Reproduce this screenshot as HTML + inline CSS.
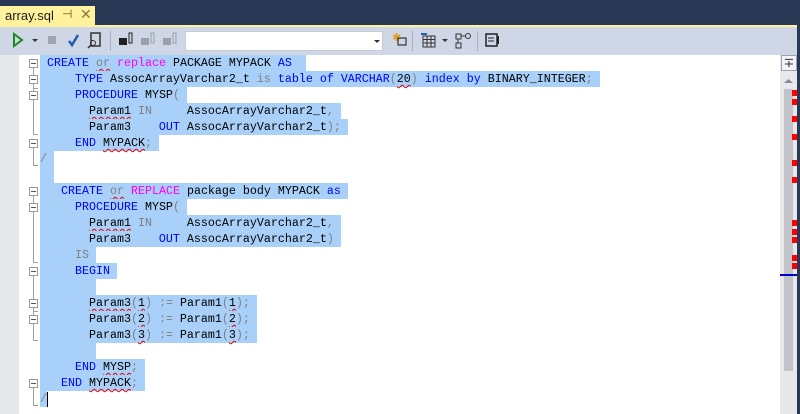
<!DOCTYPE html>
<html><head><meta charset="utf-8"><style>
*{margin:0;padding:0;box-sizing:border-box}
body{width:800px;height:414px;overflow:hidden;background:#fff;position:relative;font-family:"Liberation Sans",sans-serif}
.abs{position:absolute}
.code{position:absolute;left:40px;font-family:"Liberation Mono",monospace;font-size:11.67px;line-height:16px;height:16px;white-space:pre;color:#000}
.code span.s{background:#a8d0f8;display:inline-block;height:16px;vertical-align:top}
.k{color:#0000ff}.g{color:#808080}.m{color:#ff00ff}
.w{text-decoration:underline wavy #e00;text-decoration-thickness:1px;text-underline-offset:2px}
.fb{position:absolute;left:29px;width:9px;height:9px;border:1px solid #999;background:#fff}
.fb:after{content:"";position:absolute;left:1px;top:3px;width:5px;height:1px;background:#555}
.vl{position:absolute;left:33px;width:1px;background:#a0a0a0}
.tk{position:absolute;left:33px;width:5px;height:1px;background:#a0a0a0}
.rm{position:absolute;left:792px;width:5px;height:6px;background:#f00}
</style></head><body>
<div class="abs" style="left:0;top:0;width:800px;height:27px;background:#293955"></div>
<div class="abs" style="left:0;top:6px;width:95px;height:21px;background:#fff29d"></div>
<div class="abs" style="left:0;top:25px;width:800px;height:2px;background:#fff29d"></div>
<div class="abs" style="left:5px;top:8px;font-size:13px;color:#1e1e1e">array.sql</div>
<div class="abs" style="left:62px;top:7px;font-size:12px;color:#6a5a20">⊣</div>
<div class="abs" style="left:80px;top:6px;font-size:14px;color:#8a7a40">✕</div>
<div class="abs" style="left:0;top:27px;width:800px;height:28px;background:#cfd6e5"></div>
<svg class="abs" style="left:0;top:27px" width="800" height="28">
<path d="M14 7 L22 13 L14 19 Z" fill="none" stroke="#1b8a1b" stroke-width="2"/>
<path d="M32 12 h6 l-3 3z" fill="#333"/>
<rect x="48" y="9" width="8" height="8" fill="#a0a4ac"/>
<path d="M69 14 l3 4 l6 -10" fill="none" stroke="#1e5fb4" stroke-width="2.5"/>
<rect x="91" y="6" width="9" height="13" fill="none" stroke="#333" stroke-width="1.5"/>
<circle cx="93" cy="16" r="2.5" fill="none" stroke="#333"/><path d="M91 18 l-3 3" stroke="#333" stroke-width="1.5"/>
<line x1="110.5" y1="4" x2="110.5" y2="24" stroke="#a9b2c3"/>
<rect x="119" y="11" width="8" height="7" fill="#222"/><rect x="129" y="6" width="3" height="10" fill="none" stroke="#222"/>
<rect x="141" y="11" width="8" height="7" fill="#9aa0aa"/><rect x="151" y="6" width="3" height="10" fill="none" stroke="#9aa0aa"/>
<rect x="163" y="11" width="8" height="7" fill="#9aa0aa"/><rect x="173" y="6" width="3" height="10" fill="none" stroke="#9aa0aa"/>
<rect x="185.5" y="4.5" width="197" height="19" fill="#fff" stroke="#c6ccd6"/>
<path d="M374 13 h6 l-3 3z" fill="#333"/>
<text x="392" y="14" font-size="11" fill="#e89a1a">✱</text><rect x="398" y="11" width="8" height="7" fill="none" stroke="#333" stroke-width="1.2"/>
<line x1="412.5" y1="4" x2="412.5" y2="24" stroke="#a9b2c3"/>
<rect x="423" y="9" width="12" height="11" fill="none" stroke="#333"/><path d="M423 12.5h12M423 16h12M427 9v11M431 9v11" stroke="#333"/><path d="M421 7h6" stroke="#1e5fb4" stroke-width="2"/>
<path d="M442 12 h6 l-3 3z" fill="#333"/>
<rect x="456" y="7" width="5" height="5" fill="none" stroke="#333"/><rect x="456" y="16" width="5" height="5" fill="none" stroke="#333"/><path d="M461 9h4M458 12v4" stroke="#333"/><circle cx="468" cy="9" r="2.5" fill="none" stroke="#333"/>
<line x1="477.5" y1="4" x2="477.5" y2="24" stroke="#a9b2c3"/>
<rect x="486" y="7" width="11" height="12" fill="none" stroke="#222" stroke-width="1.5"/><path d="M488 11h6M488 14h6" stroke="#222"/><rect x="497" y="9" width="2" height="8" fill="#222"/>
</svg>
<div class="abs" style="left:0;top:55px;width:19px;height:359px;background:#e6e7e8"></div>
<div class="fb" style="top:59px"></div><div class="vl" style="top:68px;height:7px"></div>
<div class="fb" style="top:75px"></div><div class="vl" style="top:84px;height:7px"></div><div class="tk" style="top:88px"></div>
<div class="fb" style="top:91px"></div><div class="vl" style="top:100px;height:34px"></div><div class="tk" style="top:134px"></div>
<div class="fb" style="top:139px"></div><div class="vl" style="top:148px;height:17px"></div><div class="tk" style="top:165px"></div>
<div class="fb" style="top:187px"></div><div class="vl" style="top:196px;height:7px"></div>
<div class="fb" style="top:203px"></div><div class="vl" style="top:212px;height:50px"></div><div class="tk" style="top:262px"></div>
<div class="fb" style="top:267px"></div><div class="vl" style="top:276px;height:23px"></div>
<div class="fb" style="top:299px"></div><div class="vl" style="top:308px;height:7px"></div><div class="tk" style="top:311px"></div>
<div class="fb" style="top:315px"></div><div class="vl" style="top:324px;height:16px"></div><div class="tk" style="top:340px"></div>
<div class="fb" style="top:379px"></div><div class="vl" style="top:388px;height:17px"></div><div class="tk" style="top:405px"></div>
<div class="code" style="top:55px"><span class="s"> <span class="k">CREATE</span> <span class="g w">or</span> <span class="m">replace</span> PACKAGE MYPACK <span class="k">AS</span>  </span></div>
<div class="code" style="top:71px"><span class="s">     <span class="k">TYPE</span> AssocArrayVarchar2_t <span class="g">is</span> <span class="k">table of VARCHAR</span><span class="g">(</span><span class="w">20</span><span class="g">)</span> <span class="k">index by</span> BINARY_INTEGER<span class="g">;</span> </span></div>
<div class="code" style="top:87px"><span class="s">     <span class="k">PROCEDURE</span> MYSP<span class="g">(</span> </span></div>
<div class="code" style="top:103px"><span class="s">       <span class="w">Param1</span> <span class="g">IN</span>     AssocArrayVarchar2_t<span class="g">,</span> </span></div>
<div class="code" style="top:119px"><span class="s">       Param3    <span class="k">OUT</span> AssocArrayVarchar2_t<span class="g">);</span> </span></div>
<div class="code" style="top:135px"><span class="s">     <span class="k">END</span> <span class="w">MYPACK</span><span class="g">;</span> </span></div>
<div class="code" style="top:151px"><span class="s"><span class="g">/</span> </span></div>
<div class="code" style="top:167px"><span class="s">  </span></div>
<div class="code" style="top:183px"><span class="s">   <span class="k">CREATE</span> <span class="g w">or</span> <span class="m">REPLACE</span> package body MYPACK <span class="k">as</span> </span></div>
<div class="code" style="top:199px"><span class="s">     <span class="k">PROCEDURE</span> MYSP<span class="g">(</span> </span></div>
<div class="code" style="top:215px"><span class="s">       <span class="w">Param1</span> <span class="g">IN</span>     AssocArrayVarchar2_t<span class="g">,</span> </span></div>
<div class="code" style="top:231px"><span class="s">       Param3    <span class="k">OUT</span> AssocArrayVarchar2_t<span class="g">)</span> </span></div>
<div class="code" style="top:247px"><span class="s">     <span class="g">IS</span> </span></div>
<div class="code" style="top:263px"><span class="s">     <span class="k">BEGIN</span> </span></div>
<div class="code" style="top:279px"><span class="s">        </span></div>
<div class="code" style="top:295px"><span class="s">       <span class="w">Param3</span><span class="g">(</span><span class="w">1</span><span class="g">)</span> <span class="g">:=</span> Param1<span class="g">(</span><span class="w">1</span><span class="g">);</span> </span></div>
<div class="code" style="top:311px"><span class="s">       Param3<span class="g">(</span><span class="w">2</span><span class="g">)</span> <span class="g">:=</span> Param1<span class="g">(</span><span class="w">2</span><span class="g">);</span> </span></div>
<div class="code" style="top:327px"><span class="s">       Param3<span class="g">(</span><span class="w">3</span><span class="g">)</span> <span class="g">:=</span> Param1<span class="g">(</span><span class="w">3</span><span class="g">);</span> </span></div>
<div class="code" style="top:343px"><span class="s">        </span></div>
<div class="code" style="top:359px"><span class="s">     <span class="k">END</span> <span class="w">MYSP</span><span class="g">;</span> </span></div>
<div class="code" style="top:375px"><span class="s">   <span class="k">END</span> <span class="w">MYPACK</span><span class="g">;</span> </span></div>
<div class="code" style="top:391px"><span class="s"><span class="g">/</span></span></div>
<div class="abs" style="left:47px;top:392px;width:1px;height:15px;background:#000"></div>
<div class="abs" style="left:780px;top:55px;width:17px;height:359px;background:#e8e8ec"></div>
<div class="abs" style="left:781px;top:55px;width:16px;height:16px;background:#f2f4f8;border:1px solid #9aa4b6;font-size:13px;line-height:13px;text-align:center;color:#333">∓</div>
<svg class="abs" style="left:780px;top:76px" width="17" height="8"><path d="M4 7 L8.5 3 L13 7Z" fill="#868999"/></svg>
<div class="abs" style="left:784px;top:89px;width:9px;height:282px;background:#c2c3c9"></div>
<div class="rm" style="top:90px"></div><div class="rm" style="top:99px"></div><div class="rm" style="top:116px"></div>
<div class="rm" style="top:134px"></div><div class="rm" style="top:160px"></div><div class="rm" style="top:177px"></div>
<div class="rm" style="top:220px"></div><div class="rm" style="top:229px"></div><div class="rm" style="top:237px"></div>
<div class="rm" style="top:255px"></div><div class="rm" style="top:263px"></div>
<div class="abs" style="left:780px;top:274px;width:17px;height:2px;background:#0000cc"></div>
<div class="abs" style="left:797px;top:0;width:3px;height:414px;background:#293955"></div>
</body></html>
